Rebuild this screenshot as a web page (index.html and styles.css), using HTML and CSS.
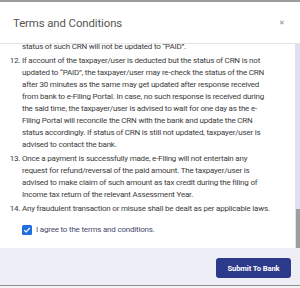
FILE: index.html
```html
<!DOCTYPE html>
<html lang="en">
<head>
  <meta charset="UTF-8">
  <meta name="viewport" content="width=device-width, initial-scale=1.0">
  <title>Terms and Conditions</title>
  <link rel="stylesheet" href="styles.css">
</head>
<body>
  <div class="modal">
    <div class="modal-header">
      <h2>Terms and Conditions</h2>
      <span class="close">&#x2715;</span>
    </div>
    <div class="modal-body">
      <div class="terms">
        <ol start="11">
          <li>In case the amount is debited from the bank account of the taxpayer/user and the payment is not confirmed by the bank,<br>status of such CRN will not be updated to &ldquo;PAID&rdquo;.</li>
          <li>If account of the taxpayer/user is deducted but the status of CRN is not updated to &ldquo;PAID&rdquo;, the taxpayer/user may re-check the status of the CRN after 30 minutes as the same may get updated after response received from bank to e-Filing Portal. In case, no such response is received during the said time, the taxpayer/user is advised to wait for one day as the e-Filing Portal will reconcile the CRN with the bank and update the CRN status accordingly. If status of CRN is still not updated, taxpayer/user is advised to contact the bank.</li>
          <li>Once a payment is successfully made, e-Filing will not entertain any request for refund/reversal of the paid amount. The taxpayer/user is advised to make claim of such amount as tax credit during the filing of Income tax return of the relevant Assessment Year.</li>
          <li>Any fraudulent transaction or misuse shall be dealt as per applicable laws.</li>
        </ol>
        <div class="agree">
          <span class="check">
            <svg width="8" height="8" viewBox="0 0 8 8"><path d="M1.2 4.2 L3.1 6 L6.8 2" fill="none" stroke="#fff" stroke-width="1.2"/></svg>
          </span>
          <span>I agree to the terms and conditions.</span>
        </div>
      </div>
      <div class="scrollbar"><div class="thumb"></div></div>
    </div>
    <div class="modal-footer">
      <button class="btn">Submit To Bank</button>
    </div>
  </div>
</body>
</html>
```

FILE: styles.css
```css
html, body {
  margin: 0;
  padding: 0;
}
body {
  font-family: Roboto, 'Liberation Sans', sans-serif;
  background: #f4f4f4;
  width: 300px;
  height: 288px;
  overflow: hidden;
}
.modal {
  background: #fff;
  border-top: 2px solid #9c9c9c;
  border-bottom: 1.5px solid #8f8f8f;
  display: flex;
  flex-direction: column;
  height: 283px;
}
.modal-header {
  height: 41px;
  display: flex;
  align-items: center;
  justify-content: space-between;
  padding: 0 13px;
  border-bottom: 1px solid #e4e4e4;
  flex-shrink: 0;
}
.modal-header h2 {
  margin: 0;
  font-size: 11.4px;
  font-weight: 400;
  letter-spacing: -0.1px;
  color: #555;
}
.close {
  font-size: 7px;
  color: #888;
  margin-right: 2px;
}
.modal-body {
  flex: 1;
  display: flex;
  min-height: 0;
}
.terms {
  flex: 1;
  overflow: hidden;
  display: flex;
  flex-direction: column;
  justify-content: flex-end;
  padding: 0 24px 12px 8px;
  font-size: 8px;
  letter-spacing: -0.2px;
  line-height: 12px;
  color: #3c3c3c;
}
.terms ol {
  margin: 0;
  padding-left: 14px;
}
.terms li {
  margin-top: 2px;
}
.agree {
  display: flex;
  align-items: center;
  gap: 4px;
  margin-top: 9px;
  margin-left: 14px;
  color: #4a4a6e;
}
.check {
  width: 10px;
  height: 10px;
  background: #1f6fe0;
  border-radius: 1.5px;
  display: flex;
  align-items: center;
  justify-content: center;
}
.scrollbar {
  width: 5px;
  background: #dfe1f0;
  display: flex;
  flex-direction: column;
  justify-content: flex-end;
}
.thumb {
  height: 39px;
  margin-left: 1px;
  background: #9e9e9e;
}
.modal-footer {
  height: 37px;
  background: #eeeef7;
  display: flex;
  justify-content: flex-end;
  align-items: flex-start;
  padding: 10px 9px 0 0;
  box-sizing: border-box;
  flex-shrink: 0;
}
.btn {
  width: 75px;
  height: 20px;
  background: #2d3a8c;
  color: #fff;
  border: none;
  border-radius: 3px;
  font-family: Roboto, 'Liberation Sans', sans-serif;
  font-size: 7.6px;
  font-weight: bold;
  letter-spacing: -0.1px;
  padding: 0;
}
```
